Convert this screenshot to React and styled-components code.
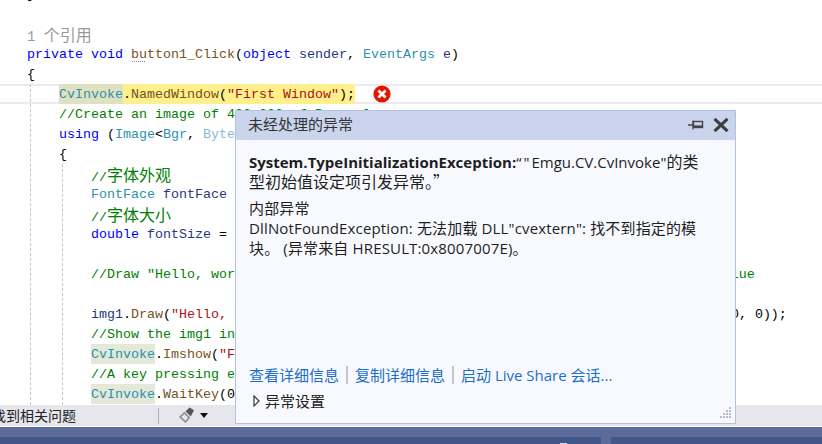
import React from "react";
import styled, { createGlobalStyle } from "styled-components";

const colors = {
  keyword: "#0000ff",
  type: "#2b91af",
  faded: "#84bccf",
  variable: "#1f377f",
  method: "#74531f",
  string: "#a31515",
  comment: "#008000",
  plain: "#000000",
};

const GlobalStyle = createGlobalStyle`
  html, body {
    margin: 0;
    height: 444px;
    overflow: hidden;
    background: #fff;
  }
  #root {
    height: 444px;
  }
`;

const T = ({ c = "plain", children }) => <Token $color={colors[c]}>{children}</Token>;

const App = () => (
  <Page>
    <GlobalStyle />
    <Editor>
      <Code>
        <Line>{"}"}</Line>
        <Line />
        <Lens>
          1 <Cjk>个引用</Cjk>
        </Lens>
        <Line>
          <T c="keyword">private void </T>
          <Suggested>button1_Click</Suggested>
          (<T c="keyword">object</T> <T c="variable">sender</T>, <T c="type">EventArgs</T>{" "}
          <T c="variable">e</T>)
        </Line>
        <Line>{"{"}</Line>
        <Line $current $indent={1}>
          <Mark $tint="#dfe1c1"><T c="type">CvInvoke</T></Mark>
          <Mark $tint="#fff08c">.<T c="method">NamedWindow</T>(<T c="string">"First Window"</T>);</Mark>
          <ErrorIcon viewBox="0 0 18 18">
            <circle cx="9" cy="9" r="8.6" fill="#e51400" />
            <path d="M5.4 5.4l7.2 7.2M12.6 5.4l-7.2 7.2" stroke="#fff" strokeWidth="2.8" />
          </ErrorIcon>
        </Line>
        <Line $indent={1}>
          <T c="comment">//Create an image of 400x200 of Bgr color</T>
        </Line>
        <Line $indent={1}>
          <T c="keyword">using</T> (<T c="type">Image</T>{"<"}<T c="type">Bgr</T>, <T c="faded">Byte</T>{"> img1 = new Image()"}
        </Line>
        <Line $indent={1}>{"{"}</Line>
        <Line $indent={2}>
          <T c="comment">//<Cjk>字体外观</Cjk></T>
        </Line>
        <Line $indent={2}>
          <T c="type">FontFace</T> <T c="variable">fontFace</T> = FontFace.HersheyComplex;
        </Line>
        <Line $indent={2}>
          <T c="comment">//<Cjk>字体大小</Cjk></T>
        </Line>
        <Line $indent={2}>
          <T c="keyword">double</T> <T c="variable">fontSize</T> = 1.0;
        </Line>
        <Line />
        <Line $indent={2}>
          <T c="comment">//Draw "Hello, world." on the image using the specific font, the color is dark blue</T>
        </Line>
        <Line />
        <Line $indent={2}>
          <T c="variable">img1</T>.<T c="method">Draw</T>(<T c="string">"Hello, world"</T>, ref fontFace, fontSize, new Point(1, 8), new Bgr(255, 0, 0));
        </Line>
        <Line $indent={2}>
          <T c="comment">//Show the img1 in a window</T>
        </Line>
        <Line $indent={2}>
          <Mark $tint="#e3e8d9"><T c="type">CvInvoke</T></Mark>.<T c="method">Imshow</T>(<T c="string">"First Window"</T>, img1);
        </Line>
        <Line $indent={2}>
          <T c="comment">//A key pressing event</T>
        </Line>
        <Line $indent={2}>
          <Mark $tint="#e3e8d9"><T c="type">CvInvoke</T></Mark>.<T c="method">WaitKey</T>(0);
        </Line>
      </Code>
      <Guide $left={30} $top={84} />
      <Guide $left={62} $top={164} />
    </Editor>

    <StatusBar>
      <StatusText>找到相关问题</StatusText>
      <StatusDivider />
      <BrushIcon viewBox="0 0 16 16">
        <path d="M1 9.5L6 4.5l5.5 5.5-4.5 5z" fill="#8a8a8a" />
        <path d="M3 9.5l3-3 3.5 3.5-2.5 3z" fill="#e6e6ec" />
        <path d="M7 4l4-3.5 4 2.5-3 6z" fill="#555" />
      </BrushIcon>
      <Caret />
    </StatusBar>
    <Taskbar>
      <TaskbarStrip />
      <TaskbarRow>
        <TaskbarCell $width={601}>
          <TrayNotch />
        </TaskbarCell>
        <TaskbarCell $width={10} $tint="#5d6b9b" />
        <TaskbarCell $width={211} />
      </TaskbarRow>
    </Taskbar>

    <Dialog>
      <TitleBar>
        <Title>未经处理的异常</Title>
        <TitleActions>
          <svg width="16" height="10" viewBox="0 0 16 10">
            <path d="M0 5h5M5 .5v9" stroke="#444" strokeWidth="1.3" fill="none" />
            <rect x="5.5" y="1.5" width="9" height="6" fill="#cad5ed" stroke="#444" strokeWidth="1.4" />
            <path d="M5.5 6.2h9" stroke="#444" strokeWidth="1.6" />
          </svg>
          <svg width="16" height="14" viewBox="0 0 16 14">
            <path d="M1.5 .8l13 12.4M14.5 .8l-13 12.4" stroke="#3d3d3d" strokeWidth="3" />
          </svg>
        </TitleActions>
      </TitleBar>
      <DialogBody>
        <Message>
          <b>System.TypeInitializationException:</b>
          <Quotes>“"</Quotes>Emgu.CV.CvInvoke"<MessageCjk>的类</MessageCjk>
          <br />
          <MessageCjk>型初始值设定项引发异常。”</MessageCjk>
        </Message>
        <Inner>
          内部异常
          <br />
          DllNotFoundException: 无法加载 DLL"cvextern": 找不到指定的模
          <br />
          块。 (异常来自 HRESULT:0x8007007E)。
        </Inner>
        <Links>
          <DialogLink>查看详细信息</DialogLink>
          <DialogLink>复制详细信息</DialogLink>
          <DialogLink>启动 Live Share 会话...</DialogLink>
        </Links>
        <Settings>
          <svg width="7" height="12" viewBox="0 0 7 12">
            <path d="M1 1l5 5-5 5z" fill="#fff" stroke="#333" strokeWidth="1.2" />
          </svg>
          异常设置
        </Settings>
      </DialogBody>
      <Grip viewBox="0 0 13 13">
        {[
          [10, 0], [7, 3], [10, 3], [4, 6], [7, 6], [10, 6],
          [1, 9], [4, 9], [7, 9], [10, 9],
        ].map(([x, y]) => (
          <rect key={`${x}-${y}`} x={x} y={y} width="2" height="2" fill="#b9bcc6" />
        ))}
      </Grip>
    </Dialog>
  </Page>
);

export default App;

const Page = styled.div`
  position: relative;
  width: 822px;
  height: 444px;
  display: flex;
  flex-direction: column;
  overflow: hidden;
`;

const Editor = styled.div`
  position: relative;
  height: 405px;
  overflow: hidden;
  background: #fff;
`;

const Code = styled.div`
  margin-top: -16px;
  font-family: "Liberation Mono", monospace;
  font-size: 13.33px;
  color: #000;
`;

const Line = styled.div`
  position: relative;
  height: 20px;
  line-height: 22px;
  white-space: pre;
  padding-left: ${(p) => 27 + (p.$indent || 0) * 32}px;
  box-shadow: ${(p) => (p.$current ? "inset 0 2px #eaeaf2, inset 0 -2px #eaeaf2" : "none")};
`;

const Lens = styled(Line)`
  color: #999;
  font-size: 14px;
`;

const Token = styled.span`
  color: ${(p) => p.$color};
`;

const Cjk = styled.span`
  font-family: "Noto Sans CJK SC", sans-serif;
  font-size: 16px;
  line-height: 20px;
`;

const Mark = styled.span`
  display: inline-block;
  height: 20px;
  vertical-align: top;
  background: ${(p) => p.$tint};
`;

const Suggested = styled.span`
  position: relative;
  color: #74531f;

  &::after {
    content: "";
    position: absolute;
    left: 1px;
    bottom: 0;
    width: 13px;
    border-bottom: 1px dotted #888;
  }
`;

const ErrorIcon = styled.svg`
  position: absolute;
  left: 373px;
  top: 1px;
  width: 18px;
  height: 18px;
`;

const Guide = styled.div`
  position: absolute;
  left: ${(p) => p.$left}px;
  top: ${(p) => p.$top}px;
  bottom: 0;
  border-left: 1px dashed #c6c6c6;
`;

const StatusBar = styled.div`
  height: 21px;
  display: flex;
  align-items: center;
  background: #e6e6ec;
`;

const StatusText = styled.span`
  margin: -2px 0 0 -8px;
  width: 166px;
  flex: none;
  font-family: "Noto Sans CJK SC", sans-serif;
  font-size: 14px;
  color: #222;
`;

const StatusDivider = styled.span`
  width: 1px;
  height: 16px;
  background: #b4b4ba;
`;

const BrushIcon = styled.svg`
  width: 17px;
  height: 17px;
  margin-left: 19px;
`;

const Caret = styled.span`
  margin-left: 5px;
  border-style: solid;
  border-width: 5px 4.5px 0;
  border-color: #111 transparent transparent;
`;

const Taskbar = styled.div`
  margin-top: 1px;
  flex: 1;
  display: flex;
  flex-direction: column;
`;

const TaskbarStrip = styled.div`
  height: 10px;
  background: #5d6b9b;
`;

const TaskbarRow = styled.div`
  flex: 1;
  display: flex;
`;

const TaskbarCell = styled.div`
  position: relative;
  width: ${(p) => p.$width}px;
  background: ${(p) => p.$tint || "#425789"};
`;

const TrayNotch = styled.span`
  position: absolute;
  left: 560px;
  bottom: 0;
  width: 7px;
  height: 1px;
  background: #d8dbe6;
`;

const Dialog = styled.div`
  position: absolute;
  left: 235px;
  top: 110px;
  width: 499px;
  height: 312px;
  display: flex;
  flex-direction: column;
  background: #f8f9ff;
  border: 1px solid #b0c2df;
  font-family: "Open Sans", "Noto Sans CJK SC", sans-serif;
  font-size: 15px;
  color: #1e1e1e;
`;

const TitleBar = styled.div`
  height: 29px;
  flex: none;
  padding: 0 6px 0 12px;
  display: flex;
  align-items: center;
  justify-content: space-between;
  background: #cad5ed;
`;

const Title = styled.span`
  margin-top: -4px;
  font-family: "Noto Sans CJK SC", sans-serif;
  font-size: 15px;
  color: #333;
`;

const TitleActions = styled.div`
  display: flex;
  align-items: center;
  gap: 9px;
  margin-top: -1px;
`;

const DialogBody = styled.div`
  flex: 1;
  padding: 12px 13px 0;
  display: flex;
  flex-direction: column;
  line-height: 20px;
`;

const Message = styled.div`
  height: 40px;
  white-space: nowrap;
`;

const MessageCjk = styled.span`
  font-family: "Noto Sans CJK SC", sans-serif;
  font-size: 16px;
  line-height: 16px;
`;

const Quotes = styled.span`
  letter-spacing: 2px;
`;

const Inner = styled.div`
  margin-top: 6px;
  white-space: nowrap;
  letter-spacing: 0.15px;
`;

const Links = styled.div`
  margin-top: auto;
  display: flex;
  align-items: center;
`;

const DialogLink = styled.span`
  color: #1a6fc9;
  font-size: 15px;
  padding: 0 7px;
  border-left: 2px solid #c4c6cc;
  line-height: 18px;

  &:first-child {
    padding-left: 0;
    border-left: 0;
  }
`;

const Settings = styled.div`
  margin: 7px 0 12px 4px;
  display: flex;
  align-items: center;
  gap: 5px;
  font-size: 15px;
  color: #222;
`;

const Grip = styled.svg`
  position: absolute;
  right: 3px;
  bottom: 3px;
  width: 13px;
  height: 13px;
`;
